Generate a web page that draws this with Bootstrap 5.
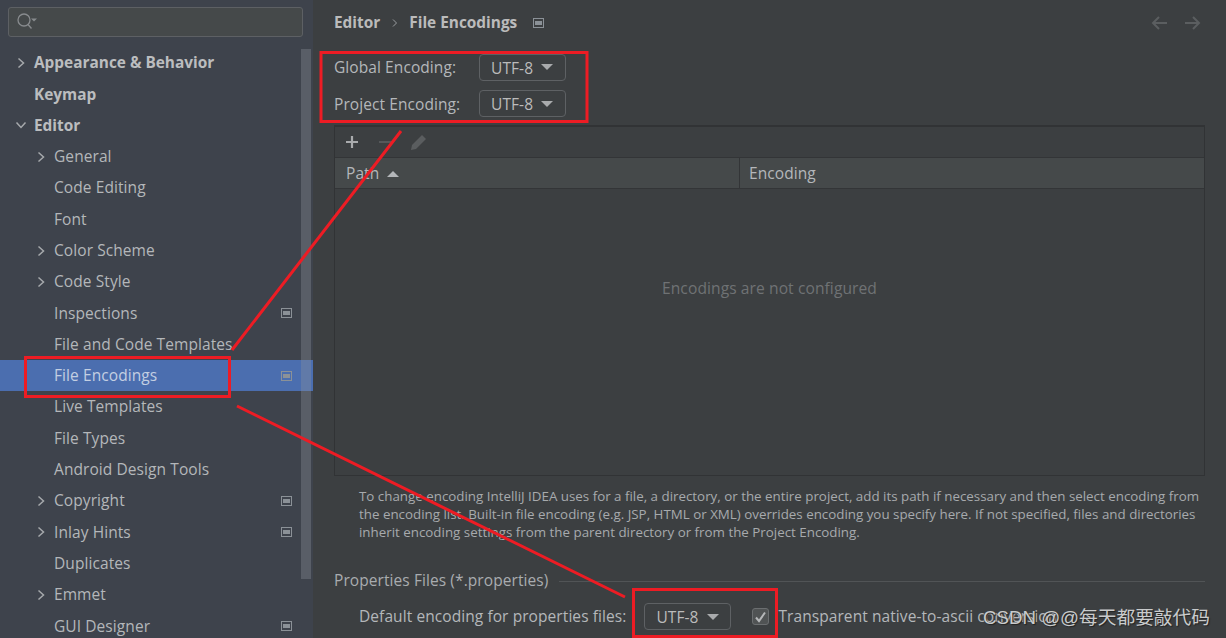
<!DOCTYPE html>
<html lang="en"><head><meta charset="utf-8"><title>File Encodings</title>
<link href="https://cdn.jsdelivr.net/npm/bootstrap@5.3.0/dist/css/bootstrap.min.css" rel="stylesheet">
<style>
html,body{height:638px;overflow:hidden;background:#3c3f41}
body{font-family:"Open Sans","Noto Sans",sans-serif;font-size:15.5px;letter-spacing:.08px;color:#b4b7ba;position:relative}
.shell{height:638px}
.side{width:313px;background:#3e434c;flex:none;position:relative}
.searchbox{margin:7px 10px 0 8px;height:30px;background:#45494a;border:1px solid #5d6064;border-radius:3px;padding-left:7px}
.tree{margin-top:9.7px}
.trow{height:31.3px;padding-right:21px;padding-top:1px;white-space:nowrap}
.trow.l0{padding-left:34px}.trow.l1{padding-left:54px}
.trow.bold{font-weight:700;font-size:15.4px;letter-spacing:0;color:#bbbdbf}
.trow.sel{background:#4b6eaf;color:#c3cfe2}
.trow .chev{margin-left:-20px;width:20px;flex:none}
.sbar{position:absolute;left:301px;top:49px;width:10px;height:530px;background:rgba(140,145,155,.35)}
.main{padding:0 21px 0 21px;min-width:0}
.crumb{height:46px;margin-bottom:3px;font-weight:700;font-size:15.4px;letter-spacing:0;color:#bbb}
.crumb .sep{margin:0 11px 0 12px}
.enc-row{height:36.500px}
.enc-lab{width:145px;padding-top:1px}
.combo{width:87px;height:27px;border:1px solid #5e6164;border-radius:4px;padding:2px 0 0 11px;color:#bbb;flex:none;background:#3c3f41}
.tri{width:0;height:0;border-left:6px solid transparent;border-right:6px solid transparent;border-top:6px solid #a9abad;margin:-2px 0 0 8px}
.tri-up{width:0;height:0;border-left:6px solid transparent;border-right:6px solid transparent;border-bottom:6px solid #b4b7ba}
.tblbox{height:351px;border:1px solid #313335;border-top-width:2px;margin-top:3px;flex:none}
.tbar{height:31px;padding-left:10px;border-bottom:1px solid #333537}
.thead{height:31px;background:#45494a;border-bottom:1px solid #333537}
.thcell{padding:1px 0 0 9px}.thcell.w1{width:405px;padding-left:11px;border-right:1px solid #333537;height:100%}
.empty{color:#6f7274;font-size:15.6px;padding-bottom:86px}
.help{padding:11px 0 0 25px;font-size:13.35px;letter-spacing:0;line-height:18px;color:#a7aaad;height:94px}
.sect{color:#a9acaf;height:22px}
.sect .rule{height:1px;background:#515456;margin-left:11px}
.prop{padding-left:25px;margin-top:11px;white-space:nowrap}
.chk{width:17px;height:17px;background:#505354;border:1px solid #6b6e70;border-radius:3px;margin:0 9px 0 21px;flex:none}
.prop-combo{margin-left:18px}
.annot{position:absolute;left:0;top:0;width:1226px;height:638px;pointer-events:none}
.wmark{position:absolute;left:983px;top:604px;font-size:18.7px;letter-spacing:0;line-height:28px;color:#c9cbcc;font-family:"Liberation Sans","Noto Sans CJK SC",sans-serif;text-shadow:1px 1px 1px #222;white-space:nowrap}
</style></head><body>
<svg width="0" height="0" class="d-block position-absolute"><defs>
<symbol id="cr" viewBox="0 0 10 12"><path d="M2.5 1.5 7.5 6 2.5 10.5" fill="none" stroke="#a6a9ac" stroke-width="1.5"/></symbol>
<symbol id="cd" viewBox="0 0 12 10"><path d="M1.5 2.5 6 7.5 10.5 2.5" fill="none" stroke="#a6a9ac" stroke-width="1.5"/></symbol>
<symbol id="pj" viewBox="0 0 11 10"><rect x=".5" y=".5" width="10" height="9" fill="none" stroke="#8b9197"/><rect x="2" y="3" width="7" height="4" fill="#8b9197"/></symbol>
</defs></svg>
<div class="shell d-flex">
<aside class="side">
<div class="searchbox d-flex align-items-center">
<svg width="22" height="20" viewBox="0 0 22 20"><circle cx="8" cy="8" r="6" fill="none" stroke="#888b8e" stroke-width="1.3"/><path d="M12 12.500 15.500 16.500" stroke="#888b8e" stroke-width="1.4"/><path d="M15 6.500h6l-3 3z" fill="#888b8e"/></svg>
</div>
<div class="tree">
<div class="trow l0 bold d-flex align-items-center"><svg class="chev" width="20" height="12"><use href="#cr" x="2" width="10" height="12"/></svg>Appearance &amp; Behavior</div>
<div class="trow l0 bold d-flex align-items-center">Keymap</div>
<div class="trow l0 bold d-flex align-items-center"><svg class="chev" width="20" height="10"><use href="#cd" x="1" width="12" height="10"/></svg>Editor</div>
<div class="trow l1 d-flex align-items-center"><svg class="chev" width="20" height="12"><use href="#cr" x="2" width="10" height="12"/></svg>General</div>
<div class="trow l1 d-flex align-items-center">Code Editing</div>
<div class="trow l1 d-flex align-items-center">Font</div>
<div class="trow l1 d-flex align-items-center"><svg class="chev" width="20" height="12"><use href="#cr" x="2" width="10" height="12"/></svg>Color Scheme</div>
<div class="trow l1 d-flex align-items-center"><svg class="chev" width="20" height="12"><use href="#cr" x="2" width="10" height="12"/></svg>Code Style</div>
<div class="trow l1 d-flex align-items-center justify-content-between">Inspections<svg width="11" height="10"><use href="#pj"/></svg></div>
<div class="trow l1 d-flex align-items-center">File and Code Templates</div>
<div class="trow l1 sel d-flex align-items-center justify-content-between">File Encodings<svg width="11" height="10"><use href="#pj"/></svg></div>
<div class="trow l1 d-flex align-items-center">Live Templates</div>
<div class="trow l1 d-flex align-items-center">File Types</div>
<div class="trow l1 d-flex align-items-center">Android Design Tools</div>
<div class="trow l1 d-flex align-items-center justify-content-between"><span class="d-flex align-items-center"><svg class="chev" width="20" height="12"><use href="#cr" x="2" width="10" height="12"/></svg>Copyright</span><svg width="11" height="10"><use href="#pj"/></svg></div>
<div class="trow l1 d-flex align-items-center justify-content-between"><span class="d-flex align-items-center"><svg class="chev" width="20" height="12"><use href="#cr" x="2" width="10" height="12"/></svg>Inlay Hints</span><svg width="11" height="10"><use href="#pj"/></svg></div>
<div class="trow l1 d-flex align-items-center">Duplicates</div>
<div class="trow l1 d-flex align-items-center"><svg class="chev" width="20" height="12"><use href="#cr" x="2" width="10" height="12"/></svg>Emmet</div>
<div class="trow l1 d-flex align-items-center justify-content-between">GUI Designer<svg width="11" height="10"><use href="#pj"/></svg></div>
</div>
<div class="sbar"></div>
</aside>
<main class="main flex-grow-1 d-flex flex-column">
<div class="crumb d-flex align-items-center">Editor<span class="sep"><svg class="d-block" width="6" height="10" viewBox="0 0 6 10"><path d="M1 1.500 4.500 5 1 8.500" fill="none" stroke="#9a9da0" stroke-width="1"/></svg></span>File Encodings
<svg class="ms-3" width="11" height="10"><use href="#pj"/></svg>
<span class="ms-auto me-1 d-flex gap-3"><svg width="17" height="14" viewBox="0 0 17 14"><path d="M16 7H2M8 1 2 7l6 6" fill="none" stroke="#5b5e60" stroke-width="2"/></svg><svg width="17" height="14" viewBox="0 0 17 14"><path d="M1 7h14M9 1l6 6-6 6" fill="none" stroke="#5b5e60" stroke-width="2"/></svg></span></div>
<div class="enc-row d-flex align-items-center"><span class="enc-lab">Global Encoding:</span><span class="combo d-flex align-items-center">UTF-8<i class="tri"></i></span></div>
<div class="enc-row d-flex align-items-center"><span class="enc-lab">Project Encoding:</span><span class="combo d-flex align-items-center">UTF-8<i class="tri"></i></span></div>
<div class="tblbox d-flex flex-column">
<div class="tbar d-flex align-items-center gap-3">
<svg width="14" height="14" viewBox="0 0 14 14"><path d="M7 1v12M1 7h12" stroke="#a9abad" stroke-width="2.200"/></svg>
<svg class="ms-1" width="15" height="14" viewBox="0 0 15 14"><path d="M0 7h15" stroke="#55585a" stroke-width="2"/></svg>
<svg width="18" height="18" viewBox="0 0 18 18"><path d="M1 17l1-5L12 2l4 4L6 16z" fill="#5a5d5f"/></svg>
</div>
<div class="thead d-flex align-items-center">
<div class="thcell w1 d-flex align-items-center">Path<i class="tri-up ms-2"></i></div>
<div class="thcell">Encoding</div></div>
<div class="empty flex-grow-1 d-flex align-items-center justify-content-center">Encodings are not configured</div>
</div>
<div class="help">To change encoding IntelliJ IDEA uses for a file, a directory, or the entire project, add its path if necessary and then select encoding from<br>the encoding list. Built-in file encoding (e.g. JSP, HTML or XML) overrides encoding you specify here. If not specified, files and directories<br>inherit encoding settings from the parent directory or from the Project Encoding.</div>
<div class="sect d-flex align-items-center">Properties Files (*.properties)<div class="rule flex-grow-1"></div></div>
<div class="prop d-flex align-items-center">Default encoding for properties files:<span class="combo prop-combo d-flex align-items-center">UTF-8<i class="tri"></i></span>
<span class="chk d-flex align-items-center justify-content-center"><svg width="13" height="12" viewBox="0 0 13 12"><path d="M2 6.500 5 10 11 1.500" fill="none" stroke="#b5b7b9" stroke-width="2"/></svg></span>Transparent native-to-ascii conversion</div>
</main>
</div>
<svg class="annot" viewBox="0 0 1226 638">
<g fill="none" stroke="#ed1c24" stroke-width="3">
<rect x="321" y="52.500" width="266" height="69"/>
<rect x="25.500" y="357.500" width="204" height="39"/>
<rect x="633.500" y="589.500" width="143" height="47"/>
<path d="M401 131 232 350M237 406 625 597" stroke-width="3"/>
</g></svg>
<div class="wmark">CSDN @@每天都要敲代码</div>
</body></html>
